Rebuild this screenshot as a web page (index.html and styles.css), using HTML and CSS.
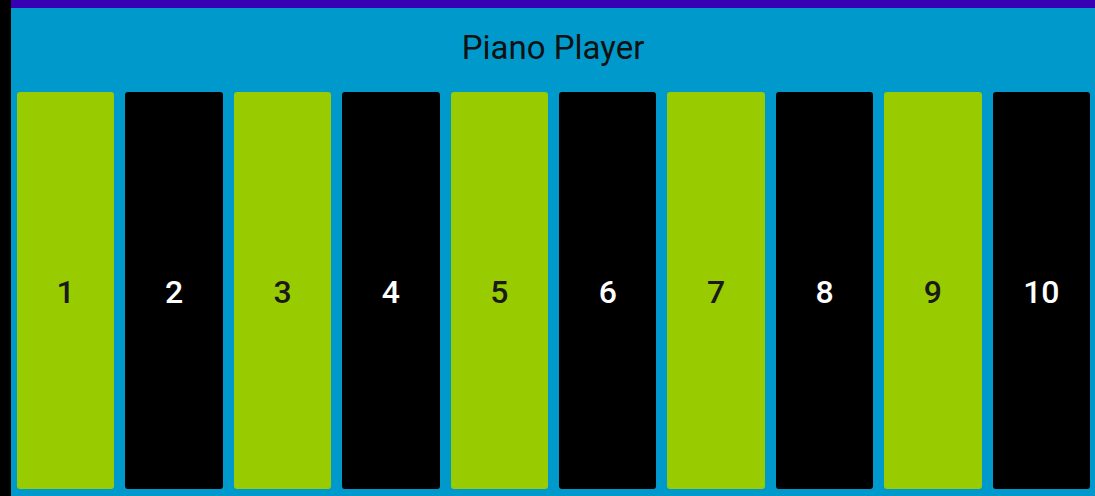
FILE: index.html
```html
<!DOCTYPE html>
<html>
<head>
<meta charset="utf-8">
<link rel="stylesheet" href="styles.css">
</head>
<body>
<div class="screen">
  <div class="side"></div>
  <div class="app">
    <div class="status"></div>
    <div class="title">Piano Player</div>
    <div class="keys">
      <div class="key green">1</div>
      <div class="key black">2</div>
      <div class="key green">3</div>
      <div class="key black">4</div>
      <div class="key green">5</div>
      <div class="key black">6</div>
      <div class="key green">7</div>
      <div class="key black">8</div>
      <div class="key green">9</div>
      <div class="key black">10</div>
    </div>
  </div>
</div>
</body>
</html>
```
FILE: styles.css
```css
html, body {
  margin: 0;
  padding: 0;
  width: 1095px;
  height: 496px;
  overflow: hidden;
  background: #000;
}
.screen {
  display: flex;
  width: 1095px;
  height: 496px;
}
.side {
  width: 11px;
  background: #000;
}
.app {
  flex: 1;
  display: flex;
  flex-direction: column;
  background: #0099cc;
}
.status {
  height: 8px;
  background: #3700b3;
}
.title {
  height: 84px;
  display: flex;
  align-items: center;
  justify-content: center;
  font-family: Roboto, "Liberation Sans", sans-serif;
  font-size: 33px;
  color: #111;
  padding-bottom: 6px;
  box-sizing: border-box;
}
.keys {
  display: flex;
  gap: 11px;
  padding: 0 5px 0 6px;
  height: 397px;
}
.key {
  flex: 1;
  border-radius: 3px;
  display: flex;
  align-items: center;
  justify-content: center;
  font-family: Roboto, "Liberation Sans", sans-serif;
  font-weight: 500;
  font-size: 32px;
  padding-top: 2px;
  box-sizing: border-box;
}
.green {
  background: #99cc00;
  color: #1a1a1a;
}
.black {
  background: #000;
  color: #fff;
}
```
